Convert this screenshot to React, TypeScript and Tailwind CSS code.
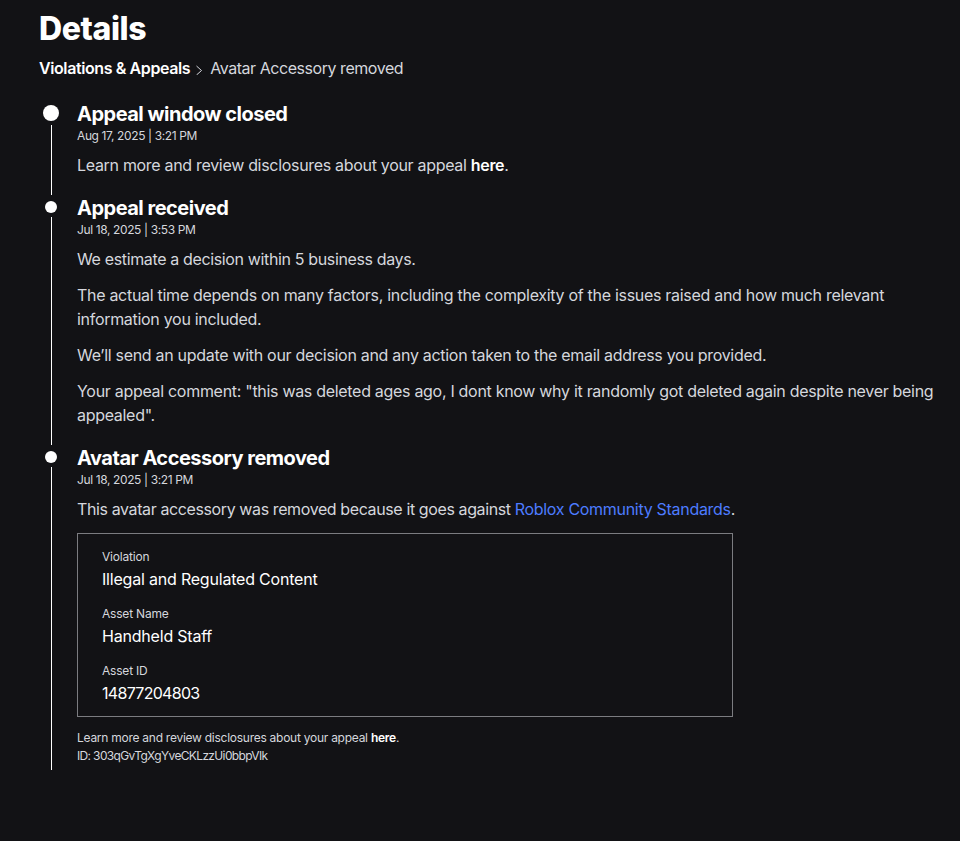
const font = "[font-family:Inter,'Noto_Sans',sans-serif]";

function Step({
  large,
  title,
  date,
  children,
}: {
  large?: boolean;
  title: string;
  date: string;
  children: React.ReactNode;
}) {
  return (
    <div className="flex">
      <div className="flex w-6 shrink-0 flex-col items-center">
        <div className={large ? "mt-[3px] size-4 rounded-full bg-white" : "mt-[5px] size-3 rounded-full bg-white"} />
        <div className="mt-1 mb-px w-px flex-1 bg-white" />
      </div>
      <div className="ml-[14px] min-w-0 flex-1">
        <h2 className="text-[20px] leading-6 font-bold tracking-[-0.5px] text-white">{title}</h2>
        <div className="mt-[3px] text-[12px] leading-[14px] tracking-[-0.38px] text-[#d5d7dd]">{date}</div>
        <div className="pt-[10px]">{children}</div>
      </div>
    </div>
  );
}

function Field({ label, value, tight }: { label: string; value: string; tight?: boolean }) {
  return (
    <div className="mb-[14px] last:mb-0">
      <div className="text-[12px] leading-[18px] tracking-[-0.2px] text-[#d5d7dd]">{label}</div>
      <div
        className={
          tight
            ? "mt-px text-[16px] leading-[24px] tracking-[-0.7px] text-white"
            : "mt-px text-[16px] leading-[24px] tracking-[-0.2px] text-white"
        }
      >
        {value}
      </div>
    </div>
  );
}

const body = "text-[16px] leading-6 tracking-[-0.3px] text-[#d5d7dd]";

export default function App() {
  return (
    <div className={`min-h-[841px] bg-[#121215] pl-[39px] pr-[10px] pt-[9px] ${font}`}>
      <h1 className="text-[32px] leading-10 font-extrabold tracking-[-0.4px] text-white">Details</h1>
      <div className="mt-[9px] flex items-center text-[16px] leading-5 tracking-[-0.4px]">
        <span className="font-semibold text-white">Violations &amp; Appeals</span>
        <svg className="mr-[6px] ml-1 mt-[3px] size-[10px] text-[#d5d7dd]" viewBox="0 0 10 10" fill="none">
          <path d="M2.5 1l5 4.5-5 4.5" stroke="currentColor" strokeWidth="1" />
        </svg>
        <span className="tracking-[-0.45px] text-[#d5d7dd]">Avatar Accessory removed</span>
      </div>

      <div className="mt-[24px]">
        <Step large title="Appeal window closed" date="Aug 17, 2025 | 3:21 PM">
          <p className={`${body} pb-[19px]`}>
            <span className="tracking-[-0.31px]">Learn more and review disclosures about your appeal </span>
            <span className="font-semibold text-white">here</span>.
          </p>
        </Step>
        <Step title="Appeal received" date="Jul 18, 2025 | 3:53 PM">
          <div className={`${body} flex flex-col gap-3 pb-[19px]`}>
            <p className="tracking-[-0.36px]">We estimate a decision within 5 business days.</p>
            <p>
              The actual time depends on many factors, including the complexity of the issues raised and how much relevant
              <br />
              information you included.
            </p>
            <p>We’ll send an update with our decision and any action taken to the email address you provided.</p>
            <p>
              Your appeal comment: "this was deleted ages ago, I dont know why it randomly got deleted again despite never being
              <br />
              appealed".
            </p>
          </div>
        </Step>
        <Step title="Avatar Accessory removed" date="Jul 18, 2025 | 3:21 PM">
          <p className={body}>
            <span className="tracking-[-0.39px]">This avatar accessory was removed because it goes against </span>
            <span className="text-[#4d7cff]">Roblox Community Standards</span>.
          </p>
          <div className="mt-3 w-[656px] border border-[#7b7c80] px-6 pt-[14px] pb-[11px]">
            <Field label="Violation" value="Illegal and Regulated Content" />
            <Field label="Asset Name" value="Handheld Staff" />
            <Field label="Asset ID" value="14877204803" tight />
          </div>
          <p className="mt-[12px] pb-[6px] text-[12px] leading-[18px] tracking-[-0.26px] text-[#d5d7dd]">
            Learn more and review disclosures about your appeal <span className="font-semibold text-white">here</span>.
            <br />
            <span className="tracking-[-0.65px]">ID: 303qGvTgXgYveCKLzzUi0bbpVIk</span>
          </p>
        </Step>
      </div>
    </div>
  );
}
